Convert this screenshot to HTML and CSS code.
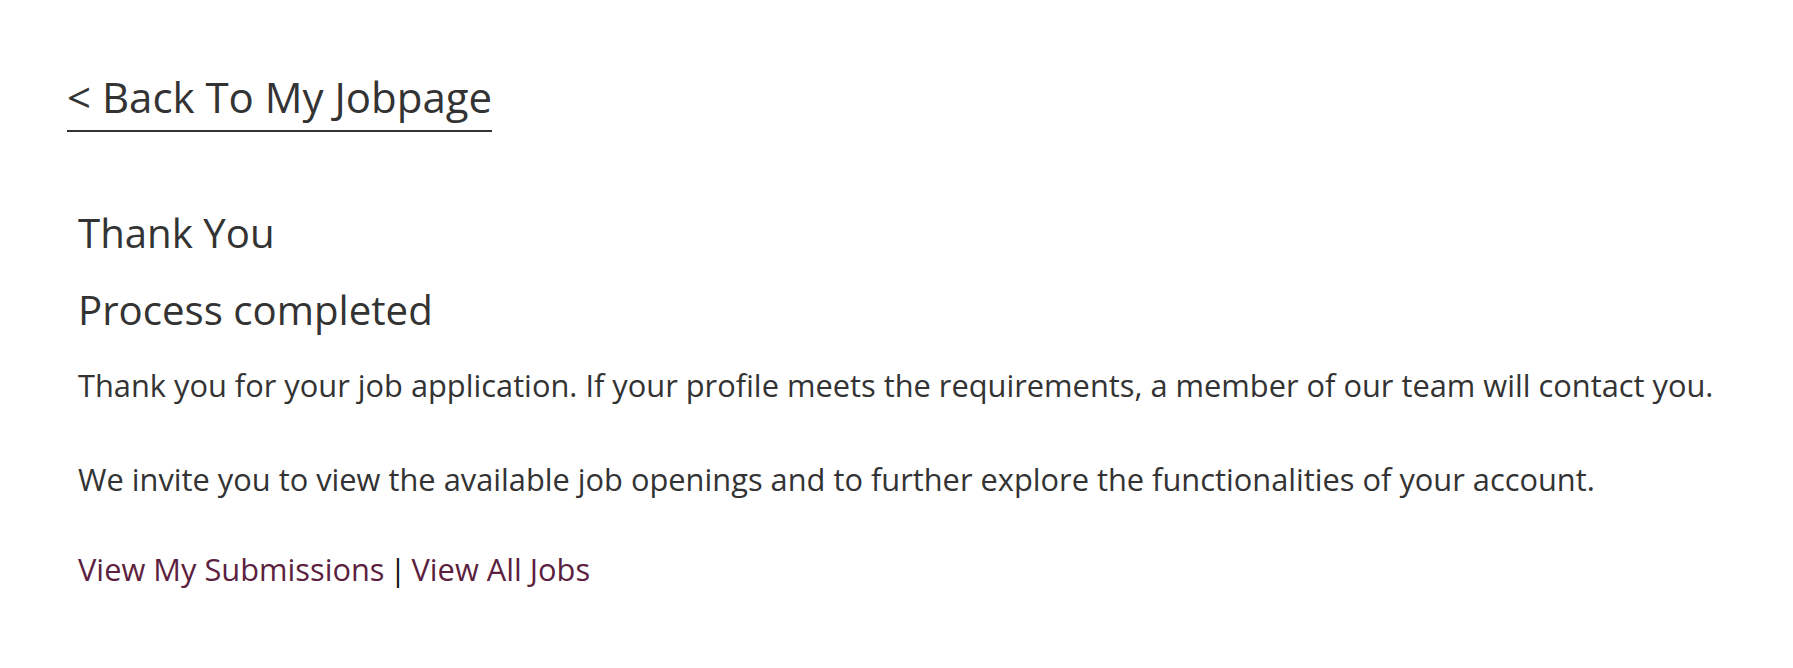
FILE: index.html
```html
<!DOCTYPE html>
<html lang="en">
<head>
<meta charset="UTF-8">
<meta name="viewport" content="width=device-width, initial-scale=1.0">
<title>Thank You</title>
<link rel="stylesheet" href="styles.css">
</head>
<body>

<div class="page">
    <a class="back" href="#">&lt; Back To My Jobpage</a>

    <div class="content">
        <h2 class="title">Thank You</h2>
        <h2 class="subtitle">Process completed</h2>

        <p class="msg">Thank you for your job application. If your profile meets the requirements, a member of our team will contact you.</p>
        <p class="msg invite">We invite you to view the available job openings and to further explore the functionalities of your account.</p>

        <p class="links"><a href="#">View My Submissions</a><span class="sep">|</span><a href="#">View All Jobs</a></p>
    </div>
</div>

</body>
</html>
```

FILE: styles.css
```css
body {
    font-family: "Open Sans", Arial, sans-serif;
    margin: 0;
    padding: 0;
    background: #fff;
    color: #333;
}

.page {
    padding: 72px 0 0 67px;
}

.back {
    display: inline-block;
    font-size: 42px;
    line-height: 50px;
    padding-bottom: 8px;
    color: #333;
    text-decoration: none;
    border-bottom: 2px solid #333;
}

.content {
    margin-left: 11px;
}

.title,
.subtitle {
    font-size: 40.2px;
    line-height: 48px;
    font-weight: normal;
    margin: 0;
}

.title {
    margin-top: 77px;
}

.subtitle {
    margin-top: 29px;
}

.msg {
    font-size: 30.8px;
    line-height: 42px;
    margin: 30px 0 0;
}

.msg.invite {
    margin-top: 52px;
}

.links {
    font-size: 30.8px;
    line-height: 42px;
    margin: 48px 0 0;
}

.links a {
    color: #5c1f40;
    text-decoration: none;
}

.sep {
    color: #111;
    margin: 0 5px;
}
```
